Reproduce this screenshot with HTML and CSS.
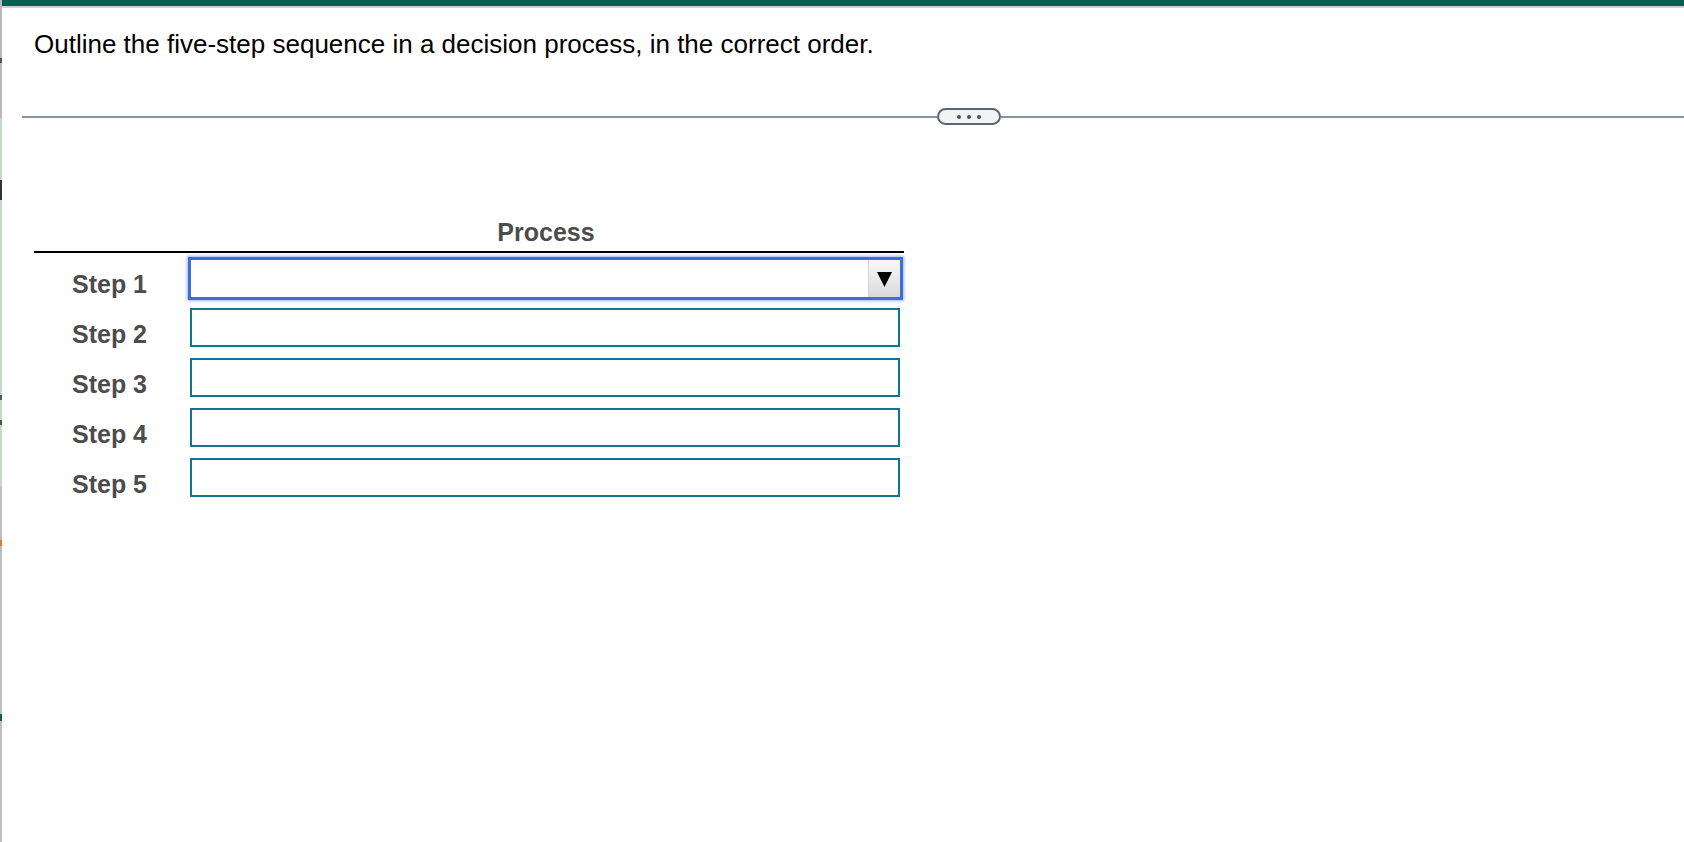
FILE: index.html
```html
<!DOCTYPE html>
<html lang="en">
<head>
<meta charset="utf-8">
<title>Decision process</title>
<link rel="stylesheet" href="styles.css">
</head>
<body>
<div class="edge"></div>
<div class="page">
  <div class="topbar"></div>
  <main class="content">
    <p class="question">Outline the five-step sequence in a decision process, in the correct order.</p>
    <div class="divider">
      <span class="rule rule-left"></span>
      <button class="more" type="button" aria-label="More"><i></i><i></i><i></i></button>
      <span class="rule rule-right"></span>
    </div>
    <div class="table">
      <div class="thead">
        <span></span>
        <span class="th">Process</span>
      </div>
      <div class="row first">
        <span class="label">Step 1</span>
        <div class="select">
          <span class="select-btn"><svg width="15" height="15" viewBox="0 0 15 15"><polygon points="0,0 15,0 7.5,15" fill="#000"/></svg></span>
        </div>
      </div>
      <div class="row second">
        <span class="label">Step 2</span>
        <div class="box"></div>
      </div>
      <div class="row">
        <span class="label">Step 3</span>
        <div class="box"></div>
      </div>
      <div class="row">
        <span class="label">Step 4</span>
        <div class="box"></div>
      </div>
      <div class="row">
        <span class="label">Step 5</span>
        <div class="box"></div>
      </div>
    </div>
  </main>
</div>
</body>
</html>
```

FILE: styles.css
```css
html, body {
  margin: 0;
  padding: 0;
  height: 100%;
  background: #fff;
}
body {
  display: flex;
  font-family: "Liberation Sans", Arial, sans-serif;
  overflow: hidden;
}
.edge {
  width: 2px;
  flex: none;
  height: 842px;
  background: linear-gradient(to bottom,
    #b9b9b9 0, #b9b9b9 58px, #555 58px, #555 63px, #b9b9b9 63px, #b9b9b9 118px,
    #c2d9c3 118px, #c2d9c3 180px, #333 180px, #333 200px, #c2d9c3 200px,
    #c2d9c3 395px, #555 395px, #555 400px, #c2d9c3 400px, #c2d9c3 420px,
    #555 420px, #555 425px, #c2d9c3 425px, #c2d9c3 487px,
    #bdbdbd 487px, #bdbdbd 540px, #e07a2a 540px, #e07a2a 546px, #bdbdbd 546px,
    #bdbdbd 714px, #0f5e54 714px, #0f5e54 721px, #bdbdbd 721px, #bdbdbd 100%);
}
.page {
  flex: 1;
  min-width: 0;
}
.topbar {
  height: 6px;
  background: #055e52;
  border-bottom: 2px solid #c9d3db;
}
.content {
  padding: 21px 0 0 20px;
}
.question {
  margin: 0 0 0 12px;
  font-size: 26px;
  line-height: 30px;
  color: #000;
}
.divider {
  display: flex;
  align-items: center;
  margin-top: 49px;
  height: 17px;
}
.rule {
  height: 2px;
  background: #8993a1;
}
.rule-left {
  width: 915px;
  flex: none;
}
.rule-right {
  flex: 1;
}
.more {
  box-sizing: border-box;
  width: 64px;
  height: 17px;
  padding: 0;
  margin: 0;
  border: 2px solid #5a6472;
  border-radius: 9px;
  background: #f2f3f5;
  display: flex;
  align-items: center;
  justify-content: center;
  gap: 6px;
  flex: none;
}
.more i {
  width: 4px;
  height: 4px;
  border-radius: 50%;
  background: #4b515a;
}
.table {
  margin: 93px 0 0 12px;
  width: 870px;
}
.thead {
  display: grid;
  grid-template-columns: 154px 716px;
  border-bottom: 2px solid #000;
  padding-bottom: 4px;
}
.th {
  text-align: center;
  font-weight: bold;
  font-size: 25px;
  line-height: 29px;
  color: #4c4c4c;
}
.row {
  display: grid;
  grid-template-columns: 154px 716px;
  grid-template-rows: 39px;
  align-items: start;
  margin-top: 11px;
}
.row.first {
  grid-template-rows: 43px;
  margin-top: 4px;
}
.row.second {
  margin-top: 8px;
}
.label {
  padding: 12px 0 0 38px;
  font-weight: bold;
  font-size: 25px;
  line-height: 28px;
  color: #4c4c4c;
}
.row.first .label {
  padding-top: 13px;
}
.select {
  box-sizing: border-box;
  width: 715px;
  height: 43px;
  border: 3px solid #3d6ed6;
  box-shadow: 0 0 3px 1px rgba(70, 120, 225, 0.55);
  background: #fff;
  display: flex;
  justify-content: flex-end;
}
.select-btn {
  width: 32px;
  height: 100%;
  box-sizing: border-box;
  border-left: 1px solid #d4d4d4;
  background: linear-gradient(to bottom, #f8f8f8, #dadada);
  display: flex;
  align-items: center;
  justify-content: center;
}
.select-btn svg {
  display: block;
  margin-top: 1px;
}
.box {
  box-sizing: border-box;
  margin-left: 2px;
  width: 710px;
  height: 39px;
  border: 2px solid #0f7593;
  background: #fff;
}
```
